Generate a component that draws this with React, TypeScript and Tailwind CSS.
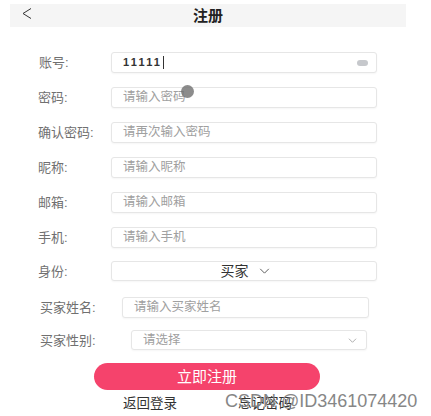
import React from "react";

const ff = { fontFamily: '"Liberation Sans", "Noto Sans CJK SC", sans-serif' };

function Chevron({ className }: { className?: string }) {
  return (
    <svg className={className} viewBox="0 0 12 7" fill="none" stroke="currentColor" strokeWidth="1.1">
      <path d="M1 1l5 5 5-5" />
    </svg>
  );
}

function Row({
  label,
  labelPl,
  inputLeft,
  inputW,
  h,
  mt,
  children,
}: {
  label: string;
  labelPl: number;
  inputLeft: number;
  inputW: number;
  h: number;
  mt: string;
  children: React.ReactNode;
}) {
  return (
    <div className={`flex items-center ${mt}`}>
      <span
        className="shrink-0 text-[13px] leading-none text-[#707070]"
        style={{ width: inputLeft, paddingLeft: labelPl }}
      >
        {label}
      </span>
      <div
        className="flex items-center rounded-[3px] border border-[#e6e6e6] bg-white shadow-[0_1px_2px_rgba(0,0,0,0.04)]"
        style={{ width: inputW, height: h }}
      >
        {children}
      </div>
    </div>
  );
}

function Ph({ t }: { t: string }) {
  return <span className="pl-[11px] text-[12.5px] leading-none text-[#a0a0a0]">{t}</span>;
}

export default function App() {
  return (
    <div className="relative h-[416px] w-[431px] overflow-hidden bg-white" style={ff}>
      <div className="pt-[4px]">
        <div className="relative ml-[10px] flex h-[23px] w-[396px] items-center justify-center bg-[#f5f5f5]">
          <svg className="absolute left-[12px] top-[4px] h-[11px] w-[10px] text-[#333]" viewBox="0 0 10 11" fill="none" stroke="currentColor" strokeWidth="1">
            <path d="M9 0.5L1 5.5l8 5" />
          </svg>
          <span className="text-[15px] font-semibold leading-none text-[#222]">注册</span>
        </div>

        <Row label="账号:" labelPl={39} inputLeft={111} inputW={266} h={21} mt="mt-[25px]">
          <span className="pl-[11px] text-[11px] font-bold leading-none tracking-[2.2px] text-[#333]">11111</span>
          <span className="ml-[1px] h-[13px] w-[1px] bg-[#333]" />
          <span className="ml-auto mr-[8px] h-[6px] w-[11px] rounded-full bg-[#c6c8cc]" />
        </Row>
        <Row label="密码:" labelPl={38} inputLeft={111} inputW={266} h={21} mt="mt-[14px]">
          <Ph t="请输入密码" />
        </Row>
        <Row label="确认密码:" labelPl={38} inputLeft={111} inputW={266} h={21} mt="mt-[14px]">
          <Ph t="请再次输入密码" />
        </Row>
        <Row label="昵称:" labelPl={38} inputLeft={111} inputW={266} h={21} mt="mt-[14px]">
          <Ph t="请输入昵称" />
        </Row>
        <Row label="邮箱:" labelPl={38} inputLeft={111} inputW={266} h={21} mt="mt-[14px]">
          <Ph t="请输入邮箱" />
        </Row>
        <Row label="手机:" labelPl={38} inputLeft={111} inputW={266} h={21} mt="mt-[14px]">
          <Ph t="请输入手机" />
        </Row>
        <Row label="身份:" labelPl={38} inputLeft={111} inputW={266} h={20} mt="mt-[13px]">
          <div className="flex w-full items-center justify-center gap-[10px] pl-[2px]">
            <span className="text-[14px] leading-none text-[#333]">买家</span>
            <Chevron className="h-[6px] w-[11px] text-[#555]" />
          </div>
        </Row>
        <Row label="买家姓名:" labelPl={40} inputLeft={122} inputW={247} h={21} mt="mt-[16px]">
          <Ph t="请输入买家姓名" />
        </Row>
        <Row label="买家性别:" labelPl={40} inputLeft={131} inputW={236} h={20} mt="mt-[12px]">
          <Ph t="请选择" />
          <Chevron className="ml-auto mr-[9px] h-[5px] w-[9px] text-[#999]" />
        </Row>

        <div className="ml-[94px] mt-[13px] flex h-[27px] w-[226px] items-center justify-center rounded-full bg-[#f5436c]">
          <span className="text-[15px] leading-none text-white">立即注册</span>
        </div>

        <div className="mt-[6px] flex text-[13.5px] leading-[16px] text-[#333]">
          <span className="ml-[123px]">返回登录</span>
          <span className="ml-[61px]">忘记密码</span>
        </div>
      </div>

      <span className="pointer-events-none absolute left-[181px] top-[85px] h-[13px] w-[13px] rounded-full bg-[#6f6f6f] opacity-80" />
      <span className="pointer-events-none absolute left-[225px] top-[391px] text-[18px] leading-[20px] text-[#7a7a7a] opacity-90">
        CSDN @ID3461074420
      </span>
    </div>
  );
}
